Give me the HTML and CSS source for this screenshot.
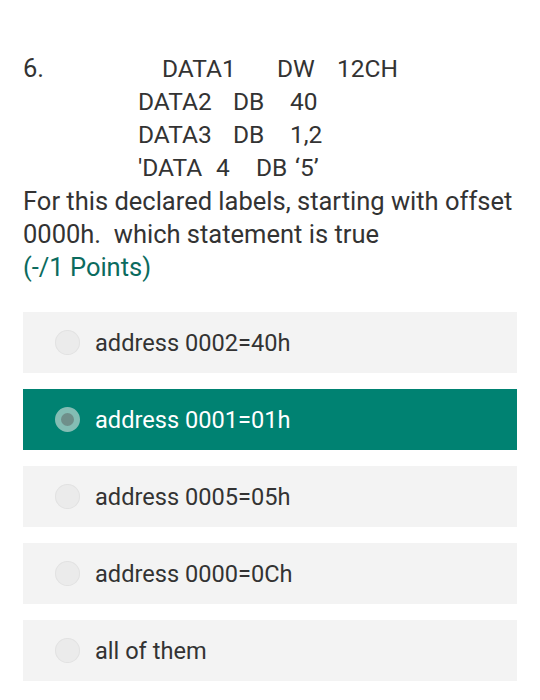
FILE: index.html
```html
<!DOCTYPE html>
<html lang="en">
<head>
  <meta charset="UTF-8" />
  <meta name="viewport" content="width=device-width, initial-scale=1.0" />
  <title>Quiz Question</title>
  <link rel="stylesheet" href="styles.css">
</head>
<body>
  <div class="question-block">
    <div class="code-line">
      <span class="num">6.</span><span class="c-label1">DATA1</span><span class="c-dir1">DW</span><span>12CH</span>
    </div>
    <div class="code-line indent">
      <span class="c-label">DATA2</span><span class="c-dir">DB</span><span>40</span>
    </div>
    <div class="code-line indent">
      <span class="c-label">DATA3</span><span class="c-dir">DB</span><span>1,2</span>
    </div>
    <div class="code-line indent">
      <span class="c-label4">'DATA</span><span class="c-four">4</span><span class="c-dir4">DB</span><span>‘5’</span>
    </div>
    <div class="question-text">For this declared labels, starting with offset 0000h.&nbsp; which statement is true</div>
    <div class="points">(-/1 Points)</div>
  </div>

  <div class="options">
    <label class="option"><span class="radio"></span>address 0002=40h</label>
    <label class="option selected"><span class="radio"></span>address 0001=01h</label>
    <label class="option"><span class="radio"></span>address 0005=05h</label>
    <label class="option"><span class="radio"></span>address 0000=0Ch</label>
    <label class="option"><span class="radio"></span>all of them</label>
  </div>
</body>
</html>
```

FILE: styles.css
```css
body {
  font-family: Roboto, "Noto Sans", sans-serif;
  background: #ffffff;
  color: #333333;
  margin: 0;
  padding: 52px 23px 0 23px;
}
.question-block {
  font-size: 25.5px;
  line-height: 33px;
}
.code-line {
  display: flex;
  white-space: nowrap;
  font-size: 24.5px;
}
.code-line .num {
  width: 139px;
  font-size: 25.5px;
}
.indent {
  padding-left: 115px;
}
.c-label1 { width: 115px; }
.c-dir1 { width: 60px; }
.c-label { width: 95px; }
.c-dir { width: 57px; }
.c-label4 { width: 78px; }
.c-four { width: 40px; }
.c-dir4 { width: 39px; }
.question-text {
  margin-top: 1px;
}
.points {
  color: #0b6b5e;
}
.options {
  margin-top: 28px;
  display: flex;
  flex-direction: column;
  gap: 16px;
  width: 494px;
}
.option {
  display: flex;
  align-items: center;
  height: 61px;
  background: #f3f3f3;
  font-size: 23.6px;
  padding-left: 32px;
  cursor: pointer;
}
.radio {
  width: 25px;
  height: 25px;
  border-radius: 50%;
  background: #ebebeb;
  box-shadow: inset 0 0 0 1px #e2e2e2;
  margin-right: 15px;
  box-sizing: border-box;
}
.option.selected {
  background: #008272;
  color: #ffffff;
}
.option.selected .radio {
  background: #6f8f8a;
  border: 6px solid #84bdb4;
  box-shadow: none;
}
```
